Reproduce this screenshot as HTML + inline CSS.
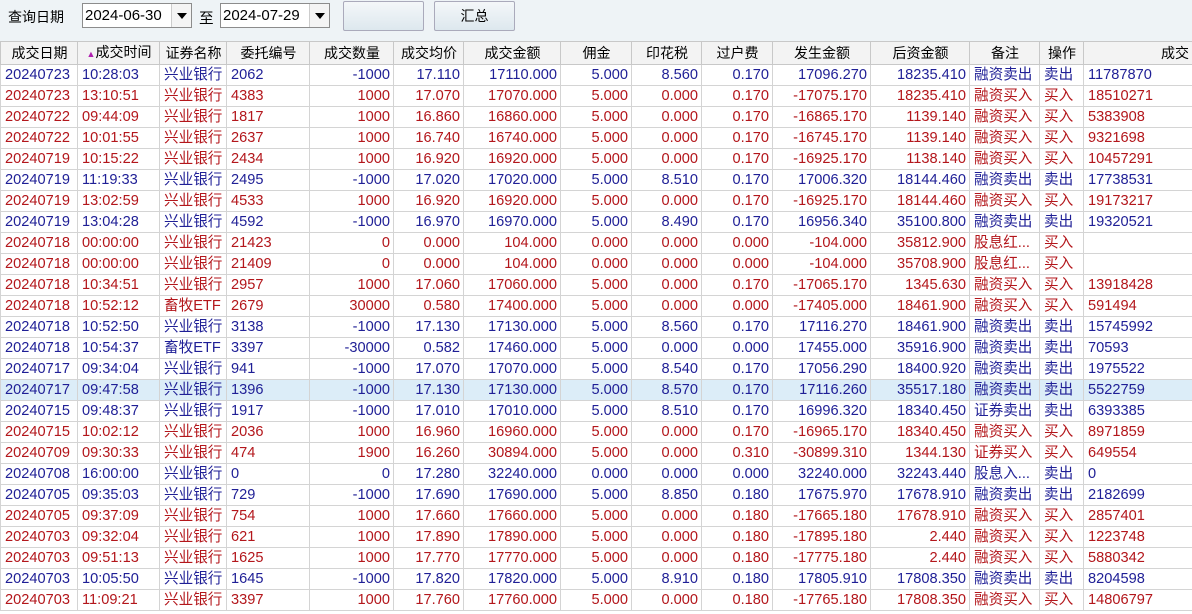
<!DOCTYPE html>
<html><head><meta charset="utf-8"><style>
body{margin:0;width:1192px;height:614px;overflow:hidden;background:#fff;font-family:"Liberation Sans","Noto Sans CJK SC",sans-serif;font-size:14.6px}
.top{position:absolute;left:0;top:0;width:1192px;height:41px;background:#eef3f6}
.lbl{position:absolute;left:8px;top:7px;font-size:14px;color:#000}
.dt{position:absolute;top:3px;width:110px;height:25px;background:#fff;border:1px solid #8c8c8c;box-sizing:border-box;font-size:15px;line-height:23px;padding-left:2px}
.dt .ar{position:absolute;right:0;top:0;width:19px;height:23px;border-left:1px solid #ccc;background:#f4f4f4}
.dt .ar:after{content:"";position:absolute;left:5px;top:9px;border-left:5px solid transparent;border-right:5px solid transparent;border-top:6px solid #000}
.btn{position:absolute;top:1px;height:30px;width:81px;box-sizing:border-box;border:1px solid #aab;border-radius:2px;background:linear-gradient(#f4f7f9,#dde8ee);text-align:center;line-height:28px;font-size:14px}
table{position:absolute;left:0;top:41px;border-collapse:collapse;table-layout:fixed;width:1192px}
td,th{border:1px solid #d4d4d4;height:20px;padding:0 3px 0 4px;white-space:nowrap;overflow:hidden;font-weight:normal;line-height:20px}
th{background:#f3f3f3;height:22px;text-align:center;color:#000;border-color:#c8c8c8;font-size:14px}
td{text-align:right}
td:nth-child(1),td:nth-child(2),td:nth-child(3),td:nth-child(4),td:nth-child(13),td:nth-child(14),td:nth-child(15){text-align:left}
.b td{color:#1f1f96}.r td{color:#b3161b}
.h td{background:#dcedf8}
</style></head><body>
<div class="top">
<div class="lbl">查询日期</div>
<div class="dt" style="left:82px">2024-06-30<div class="ar"></div></div>
<div style="position:absolute;left:199px;top:7px">至</div>
<div class="dt" style="left:220px">2024-07-29<div class="ar"></div></div>
<div class="btn" style="left:343px"></div>
<div class="btn" style="left:434px">汇总</div>
</div>
<table>
<colgroup><col style="width:77px"><col style="width:82px"><col style="width:67px"><col style="width:83px"><col style="width:84px"><col style="width:70px"><col style="width:97px"><col style="width:71px"><col style="width:70px"><col style="width:71px"><col style="width:98px"><col style="width:99px"><col style="width:70px"><col style="width:44px"><col style="width:109px"></colgroup>
<tr><th>成交日期</th><th><span style="color:#b020b0;font-size:9px">▲</span>成交时间</th><th>证券名称</th><th>委托编号</th><th>成交数量</th><th>成交均价</th><th>成交金额</th><th>佣金</th><th>印花税</th><th>过户费</th><th>发生金额</th><th>后资金额</th><th>备注</th><th>操作</th><th style="text-align:right">成交</th></tr>
<tr class="b"><td>20240723</td><td>10:28:03</td><td>兴业银行</td><td>2062</td><td>-1000</td><td>17.110</td><td>17110.000</td><td>5.000</td><td>8.560</td><td>0.170</td><td>17096.270</td><td>18235.410</td><td>融资卖出</td><td>卖出</td><td>11787870</td></tr>
<tr class="r"><td>20240723</td><td>13:10:51</td><td>兴业银行</td><td>4383</td><td>1000</td><td>17.070</td><td>17070.000</td><td>5.000</td><td>0.000</td><td>0.170</td><td>-17075.170</td><td>18235.410</td><td>融资买入</td><td>买入</td><td>18510271</td></tr>
<tr class="r"><td>20240722</td><td>09:44:09</td><td>兴业银行</td><td>1817</td><td>1000</td><td>16.860</td><td>16860.000</td><td>5.000</td><td>0.000</td><td>0.170</td><td>-16865.170</td><td>1139.140</td><td>融资买入</td><td>买入</td><td>5383908</td></tr>
<tr class="r"><td>20240722</td><td>10:01:55</td><td>兴业银行</td><td>2637</td><td>1000</td><td>16.740</td><td>16740.000</td><td>5.000</td><td>0.000</td><td>0.170</td><td>-16745.170</td><td>1139.140</td><td>融资买入</td><td>买入</td><td>9321698</td></tr>
<tr class="r"><td>20240719</td><td>10:15:22</td><td>兴业银行</td><td>2434</td><td>1000</td><td>16.920</td><td>16920.000</td><td>5.000</td><td>0.000</td><td>0.170</td><td>-16925.170</td><td>1138.140</td><td>融资买入</td><td>买入</td><td>10457291</td></tr>
<tr class="b"><td>20240719</td><td>11:19:33</td><td>兴业银行</td><td>2495</td><td>-1000</td><td>17.020</td><td>17020.000</td><td>5.000</td><td>8.510</td><td>0.170</td><td>17006.320</td><td>18144.460</td><td>融资卖出</td><td>卖出</td><td>17738531</td></tr>
<tr class="r"><td>20240719</td><td>13:02:59</td><td>兴业银行</td><td>4533</td><td>1000</td><td>16.920</td><td>16920.000</td><td>5.000</td><td>0.000</td><td>0.170</td><td>-16925.170</td><td>18144.460</td><td>融资买入</td><td>买入</td><td>19173217</td></tr>
<tr class="b"><td>20240719</td><td>13:04:28</td><td>兴业银行</td><td>4592</td><td>-1000</td><td>16.970</td><td>16970.000</td><td>5.000</td><td>8.490</td><td>0.170</td><td>16956.340</td><td>35100.800</td><td>融资卖出</td><td>卖出</td><td>19320521</td></tr>
<tr class="r"><td>20240718</td><td>00:00:00</td><td>兴业银行</td><td>21423</td><td>0</td><td>0.000</td><td>104.000</td><td>0.000</td><td>0.000</td><td>0.000</td><td>-104.000</td><td>35812.900</td><td>股息红...</td><td>买入</td><td></td></tr>
<tr class="r"><td>20240718</td><td>00:00:00</td><td>兴业银行</td><td>21409</td><td>0</td><td>0.000</td><td>104.000</td><td>0.000</td><td>0.000</td><td>0.000</td><td>-104.000</td><td>35708.900</td><td>股息红...</td><td>买入</td><td></td></tr>
<tr class="r"><td>20240718</td><td>10:34:51</td><td>兴业银行</td><td>2957</td><td>1000</td><td>17.060</td><td>17060.000</td><td>5.000</td><td>0.000</td><td>0.170</td><td>-17065.170</td><td>1345.630</td><td>融资买入</td><td>买入</td><td>13918428</td></tr>
<tr class="r"><td>20240718</td><td>10:52:12</td><td>畜牧ETF</td><td>2679</td><td>30000</td><td>0.580</td><td>17400.000</td><td>5.000</td><td>0.000</td><td>0.000</td><td>-17405.000</td><td>18461.900</td><td>融资买入</td><td>买入</td><td>591494</td></tr>
<tr class="b"><td>20240718</td><td>10:52:50</td><td>兴业银行</td><td>3138</td><td>-1000</td><td>17.130</td><td>17130.000</td><td>5.000</td><td>8.560</td><td>0.170</td><td>17116.270</td><td>18461.900</td><td>融资卖出</td><td>卖出</td><td>15745992</td></tr>
<tr class="b"><td>20240718</td><td>10:54:37</td><td>畜牧ETF</td><td>3397</td><td>-30000</td><td>0.582</td><td>17460.000</td><td>5.000</td><td>0.000</td><td>0.000</td><td>17455.000</td><td>35916.900</td><td>融资卖出</td><td>卖出</td><td>70593</td></tr>
<tr class="b"><td>20240717</td><td>09:34:04</td><td>兴业银行</td><td>941</td><td>-1000</td><td>17.070</td><td>17070.000</td><td>5.000</td><td>8.540</td><td>0.170</td><td>17056.290</td><td>18400.920</td><td>融资卖出</td><td>卖出</td><td>1975522</td></tr>
<tr class="b h"><td>20240717</td><td>09:47:58</td><td>兴业银行</td><td>1396</td><td>-1000</td><td>17.130</td><td>17130.000</td><td>5.000</td><td>8.570</td><td>0.170</td><td>17116.260</td><td>35517.180</td><td>融资卖出</td><td>卖出</td><td>5522759</td></tr>
<tr class="b"><td>20240715</td><td>09:48:37</td><td>兴业银行</td><td>1917</td><td>-1000</td><td>17.010</td><td>17010.000</td><td>5.000</td><td>8.510</td><td>0.170</td><td>16996.320</td><td>18340.450</td><td>证券卖出</td><td>卖出</td><td>6393385</td></tr>
<tr class="r"><td>20240715</td><td>10:02:12</td><td>兴业银行</td><td>2036</td><td>1000</td><td>16.960</td><td>16960.000</td><td>5.000</td><td>0.000</td><td>0.170</td><td>-16965.170</td><td>18340.450</td><td>融资买入</td><td>买入</td><td>8971859</td></tr>
<tr class="r"><td>20240709</td><td>09:30:33</td><td>兴业银行</td><td>474</td><td>1900</td><td>16.260</td><td>30894.000</td><td>5.000</td><td>0.000</td><td>0.310</td><td>-30899.310</td><td>1344.130</td><td>证券买入</td><td>买入</td><td>649554</td></tr>
<tr class="b"><td>20240708</td><td>16:00:00</td><td>兴业银行</td><td>0</td><td>0</td><td>17.280</td><td>32240.000</td><td>0.000</td><td>0.000</td><td>0.000</td><td>32240.000</td><td>32243.440</td><td>股息入...</td><td>卖出</td><td>0</td></tr>
<tr class="b"><td>20240705</td><td>09:35:03</td><td>兴业银行</td><td>729</td><td>-1000</td><td>17.690</td><td>17690.000</td><td>5.000</td><td>8.850</td><td>0.180</td><td>17675.970</td><td>17678.910</td><td>融资卖出</td><td>卖出</td><td>2182699</td></tr>
<tr class="r"><td>20240705</td><td>09:37:09</td><td>兴业银行</td><td>754</td><td>1000</td><td>17.660</td><td>17660.000</td><td>5.000</td><td>0.000</td><td>0.180</td><td>-17665.180</td><td>17678.910</td><td>融资买入</td><td>买入</td><td>2857401</td></tr>
<tr class="r"><td>20240703</td><td>09:32:04</td><td>兴业银行</td><td>621</td><td>1000</td><td>17.890</td><td>17890.000</td><td>5.000</td><td>0.000</td><td>0.180</td><td>-17895.180</td><td>2.440</td><td>融资买入</td><td>买入</td><td>1223748</td></tr>
<tr class="r"><td>20240703</td><td>09:51:13</td><td>兴业银行</td><td>1625</td><td>1000</td><td>17.770</td><td>17770.000</td><td>5.000</td><td>0.000</td><td>0.180</td><td>-17775.180</td><td>2.440</td><td>融资买入</td><td>买入</td><td>5880342</td></tr>
<tr class="b"><td>20240703</td><td>10:05:50</td><td>兴业银行</td><td>1645</td><td>-1000</td><td>17.820</td><td>17820.000</td><td>5.000</td><td>8.910</td><td>0.180</td><td>17805.910</td><td>17808.350</td><td>融资卖出</td><td>卖出</td><td>8204598</td></tr>
<tr class="r"><td>20240703</td><td>11:09:21</td><td>兴业银行</td><td>3397</td><td>1000</td><td>17.760</td><td>17760.000</td><td>5.000</td><td>0.000</td><td>0.180</td><td>-17765.180</td><td>17808.350</td><td>融资买入</td><td>买入</td><td>14806797</td></tr>
</table>
</body></html>
